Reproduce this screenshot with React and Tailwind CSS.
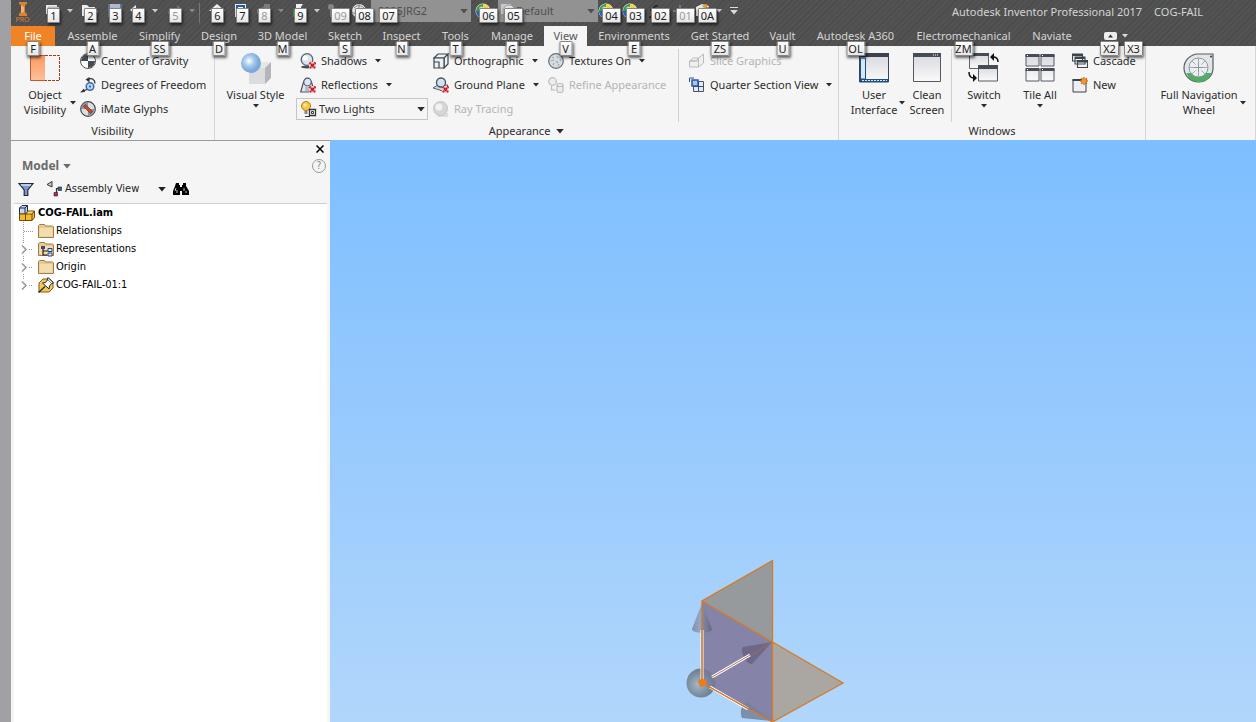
import React, { useState } from 'react';
import clsx from 'clsx';

const quickAccess = [
  { icon: 'new', name: 'New file', tip: '1', width: 'w-[37px]', caret: true },
  { icon: 'open', name: 'Open', tip: '2', width: 'w-[25px]' },
  { icon: 'save', name: 'Save', tip: '3', width: 'w-[23px]' },
  { icon: 'undo', name: 'Undo', tip: '4', width: 'w-[37px]', caret: true },
  { icon: 'redo', name: 'Redo', tip: '5', width: 'w-8', caret: true, disabled: true },
];

const quickAccessTools = [
  { icon: 'home', name: 'Home', tip: '6', width: 'w-[25px]' },
  { icon: 'sheet', name: 'Return', tip: '7', width: 'w-[22px]' },
  { icon: 'local', name: 'Local update', tip: '8', width: 'w-9', caret: true, disabled: true },
  { icon: 'select', name: 'Select', tip: '9', width: 'w-[35px]', caret: true },
  { icon: 'filter', name: 'Filter', tip: '09', width: 'w-6', disabled: true },
  { icon: 'material', name: 'Material', tip: '08', width: 'w-5' },
];

const quickAccessEnd = [
  { icon: 'wheel', name: 'Adjust', tip: '04', width: 'w-6' },
  { icon: 'wheel', name: 'Clear', tip: '03', width: 'w-[25px]' },
  { icon: 'fx', name: 'Parameters', tip: '02', width: 'w-[25px]' },
  { icon: 'plus', name: 'Measure', tip: '01', width: 'w-[22px]', disabled: true },
  { icon: 'brush', name: 'Design doctor', tip: '0A', width: 'w-9', caret: true },
];

const tabs = [
  { label: 'Assemble', tip: 'A', width: 'w-[71px]' },
  { label: 'Simplify', tip: 'SS', width: 'w-[63px]' },
  { label: 'Design', tip: 'D', width: 'w-14' },
  { label: '3D Model', tip: 'M', width: 'w-[71px]' },
  { label: 'Sketch', tip: 'S', width: 'w-[54px]' },
  { label: 'Inspect', tip: 'N', width: 'w-[59px]' },
  { label: 'Tools', tip: 'T', width: 'w-[49px]' },
  { label: 'Manage', tip: 'G', width: 'w-16' },
  { label: 'View', tip: 'V', width: 'w-[43px]' },
  { label: 'Environments', tip: 'E', width: 'w-[94px]' },
  { label: 'Get Started', tip: 'ZS', width: 'w-[78px]' },
  { label: 'Vault', tip: 'U', width: 'w-[47px]' },
  { label: 'Autodesk A360', tip: 'OL', width: 'w-[99px]' },
  { label: 'Electromechanical', tip: 'ZM', width: 'w-[117px]' },
  { label: 'Naviate', width: 'w-[60px]' },
];

const treeItems = [
  { label: 'Relationships', icon: 'folder' },
  { label: 'Representations', icon: 'repFolder', expandable: true },
  { label: 'Origin', icon: 'folder', expandable: true },
  { label: 'COG-FAIL-01:1', icon: 'part', expandable: true, last: true },
];

const redCross = (
  <g>
    <rect x="9" y="9" width="7" height="7" fill="#f6dada" />
    <path d="M9.5 9.5l6 6M15.5 9.5l-6 6" stroke="#c4161c" strokeWidth="2.2" strokeDasharray="1.6 .5" />
  </g>
);

const colorWheel = (
  <g>
    <circle cx="8" cy="8" r="7.5" fill="#f4f4f4" />
    <path d="M8 8V1a7 7 0 0 0-7 7z" fill="#3f9b45" />
    <path d="M8 8V1a7 7 0 0 1 6 4z" fill="#f3d43b" />
    <path d="M8 8l6-3a7 7 0 0 1-2 9z" fill="#e2602c" />
    <path d="M8 8H1a7 7 0 0 0 11 6z" fill="#2d67c0" />
    <circle cx="6.5" cy="6" r="2.5" fill="#fff" opacity=".7" />
  </g>
);

const folderShape = (
  <g>
    <path d="M.5 14.500v-12l1-1h5l1 1.500h7l1 1v10.500z" fill="#e9c98f" stroke="#a07d45" />
    <path d="M1.500 5h13v8.500h-13z" fill="#f3dcae" />
  </g>
);

const drawings = {
  new: (
    <g>
      <path d="M1 2h11v9H1z" fill="#ececec" />
      <path d="M3 4h11v9H3z" fill="#d2d2d2" stroke="#888" strokeWidth=".5" />
    </g>
  ),
  open: <path d="M0 2h5l2 2h6v3H5l-2 6H0zM6 8h10l-3 6H3z" fill="#ededed" />,
  save: (
    <g>
      <path d="M1 1h14v13H1z" fill="#66758c" />
      <path d="M3 1h10v6H3z" fill="#aebacb" />
      <path d="M4 9h8v5H4z" fill="#ddd" />
    </g>
  ),
  undo: <path d="M0 7l6-5v3h4c4 0 5 3 5 7-1-3-3-4-5-4H6v4z" fill="#eee" />,
  redo: <path d="M16 7l-6-5v3H6c-4 0-5 3-5 7 1-3 3-4 5-4h4v4z" fill="#777" />,
  home: (
    <g>
      <path d="M8 1l8 7h-2v6H2V8H0z" fill="#f2f2f2" />
      <path d="M8 4l4 4v5H4V8z" fill="#bcbcbc" />
    </g>
  ),
  sheet: (
    <g>
      <path d="M1 1h11v13H1z" fill="#e8eef5" />
      <path d="M3 3h7v9H3z" fill="#fff" stroke="#245c9c" strokeWidth="2" />
    </g>
  ),
  local: <path d="M1 6h5V3l7 6-7 5v-3H1zM8 1h6v4H8z" fill="#7c7c7c" />,
  select: (
    <g>
      <path d="M4 1h7l-2 3v4H4z" fill="#f1f1f1" />
      <path d="M1 7l6-1 2 2v6H1z" fill="#3c9a47" />
    </g>
  ),
  filter: (
    <g fill="#858585">
      <circle cx="4" cy="4" r="3" />
      <path d="M3 5h2v9H3zM7 8h7v6H7z" />
    </g>
  ),
  material: (
    <g>
      <circle cx="8" cy="8" r="7" fill="#e6e6e6" />
      <path d="M3 5c3-3 7-3 10 0M1 9c4 3 10 3 14 0M8 1v14" stroke="#888" fill="none" />
    </g>
  ),
  wheel: colorWheel,
  ball: (
    <g>
      <path d="M1 1h10v10H1z" fill="#c9c9c9" />
      <circle cx="9" cy="8" r="6" fill="#e3e3e3" stroke="#999" />
    </g>
  ),
  fx: <path d="M2 14c3 1 3-3 4-6s1-6 5-5M3 7h6M9 8l5 6M14 8l-5 6" stroke="#222" strokeWidth="1.5" fill="none" />,
  plus: <path d="M8 2v12M1 8h14" stroke="#777" strokeWidth="2" />,
  brush: (
    <g>
      <path d="M2 4l6-3 7 2-4 10H2z" fill="#e9e9e9" />
      <path d="M8 3l3-2 3 1-2 5z" fill="#ef9b2b" />
      <path d="M12 4l3 1-1 5z" fill="#3867ad" />
    </g>
  ),
  gravity: (
    <g>
      <circle cx="8" cy="8" r="7.5" fill="#fff" stroke="#555" />
      <path d="M8 8V1a7 7 0 0 0-7 7zM8 8h7a7 7 0 0 1-7 7z" fill="#464b54" />
    </g>
  ),
  freedom: (
    <g fill="none">
      <circle cx="10" cy="9.5" r="3.8" fill="#b9d5f2" stroke="#3a6cb0" strokeWidth="1.5" />
      <circle cx="10" cy="9.5" r="1" fill="#27518e" />
      <path d="M8 2.500c4-2 7 0 7 4M7 12.500l-4 1.500" stroke="#333" strokeWidth="1.3" />
      <path d="M9.500 0L5.500 2.500l4 3z" fill="#333" />
      <path d="M0 15.500l4-4 1 3.500z" fill="#333" />
    </g>
  ),
  glyphs: (
    <g>
      <circle cx="8" cy="8" r="7.3" fill="#d9dee4" stroke="#444" strokeWidth="1.2" />
      <path d="M8 8V1a7 7 0 0 0-7 7zM8 8h7a7 7 0 0 1-7 7z" fill="#8d949d" />
      <path d="M3.500 5.500l2-2 7 7-2 2z" fill="#c84a26" stroke="#7c2a12" strokeWidth=".7" />
    </g>
  ),
  shadows: (
    <g>
      <ellipse cx="7" cy="14" rx="6" ry="1.5" fill="#454e5a" />
      <circle cx="7" cy="6.5" r="5.8" fill="#d8e4ef" stroke="#5b6571" strokeWidth="1.3" />
      <circle cx="5.5" cy="5" r="2.5" fill="#fff" />
      {redCross}
    </g>
  ),
  reflections: (
    <g>
      <path d="M3.500 5h8l3 10H.7z" fill="#e6e9ee" stroke="#4b5360" strokeWidth="1.2" />
      <circle cx="7.5" cy="5" r="3.8" fill="#dae6f1" stroke="#4b5360" strokeWidth="1.2" />
      <path d="M5 14v-3a2.500 2.500 0 0 1 5 0v3" fill="#aebccc" />
      {redCross}
    </g>
  ),
  lights: (
    <g>
      <circle cx="5" cy="5" r="4.5" fill="#fbc83f" stroke="#b57a17" />
      <circle cx="4" cy="4" r="1.5" fill="#fff1b8" />
      <path d="M3.500 9.500h3V13h-3z" fill="#888" />
      <path d="M8.500 8.500h6v6h-6z" fill="#fff" stroke="#333" strokeWidth="1.3" />
      <path d="M10.500 10.500h2v2h-2z" stroke="#333" fill="none" />
      <path d="M4 15.500h5" stroke="#333" />
    </g>
  ),
  ortho: (
    <g fill="#eef1f4" stroke="#3d454f" strokeWidth="1.2">
      <path d="M1 5l4-4h10l-4 4zM11 5l4-4v10l-4 4z" />
      <path d="M1 5h10v10H1zM1 9h5v6" />
    </g>
  ),
  ground: (
    <g>
      <path d="M0 11l5-3h10l-5 6z" fill="#cfd8e2" stroke="#59636f" />
      <circle cx="8" cy="5.5" r="4.5" fill="#d2e2f2" stroke="#42505f" strokeWidth="1.3" />
      {redCross}
    </g>
  ),
  rayTrace: (
    <g>
      <path d="M3 12h12v4H5z" fill="#dedede" />
      <circle cx="7.5" cy="7.5" r="7" fill="#d6d6d6" stroke="#c4c4c4" />
      <circle cx="6" cy="6" r="3.5" fill="#f2f2f2" />
    </g>
  ),
  textures: (
    <g>
      <circle cx="8" cy="8" r="7.3" fill="#d5dce2" stroke="#666e77" strokeWidth="1.2" />
      <path d="M4 4l2 1M9 3l1 2M3 8l3-1M8 8l2 2M12 6l1 2M5 12l1-2M10 13l1-2" stroke="#a3adb6" strokeWidth="1.3" />
    </g>
  ),
  refine: (
    <g fill="#ededed" stroke="#bcbcbc" strokeWidth="1.2">
      <circle cx="4.5" cy="4.5" r="3.8" />
      <path d="M9 8c0-2 6-2 6 0v6c0 2-6 2-6 0zM9 8c0 2 6 2 6 0M3.500 9v4h4" />
    </g>
  ),
  slice: (
    <g fill="#f0f0f0" stroke="#bbb">
      <path d="M.5 8l4-3h6l-4 3zM.5 8h9v6h-9z" />
      <path d="M9.500 5l5-4v9l-5 4z" />
    </g>
  ),
  quarter: (
    <g>
      <path d="M5 4.500h9.500v10H4.500V9" fill="#e6eaf0" stroke="#4a5563" />
      <path d="M3 3h6v6H3z" fill="#a9c6f0" stroke="#2456a8" strokeWidth="1.5" />
      <path d="M.5 5V1H5M9.500 5v10M5 9.500h10" fill="none" stroke="#31507e" />
    </g>
  ),
  cascade: (
    <g fill="#f4f6f8" stroke="#3e444c" strokeWidth="1.1">
      <path d="M.5 1h10v7H.5zM3 4h10v7H3zM5.500 7.500h10v7h-10z" />
      <path d="M.5 2h10M3 5h10M5.500 8.500h10" strokeWidth="1.8" />
    </g>
  ),
  newWindow: (
    <g>
      <path d="M1 2.500h13v12.500H1z" fill="#eef0f3" stroke="#3e444c" />
      <path d="M.5 3h14" stroke="#3e444c" strokeWidth="2" />
      <path d="M12 0l1 2 2-1-1 2 2 1-2 1 1 2-2-1-1 2-1-2-2 1 1-2-2-1 2-1-1-2 2 1z" fill="#f29a27" stroke="#c85e14" strokeWidth=".6" />
    </g>
  ),
  funnel: (
    <g>
      <path d="M1 2.500h14L9.800 9v5.500H6.200V9z" fill="#7c98c4" stroke="#1d2a44" strokeWidth="1.2" />
      <path d="M3 4h10" stroke="#e6eefb" strokeWidth="1.2" />
    </g>
  ),
  assembly: (
    <g fill="none">
      <path d="M1 3.500l5-3v5.500z" fill="#ccc" stroke="#333" />
      <path d="M10.500 15V7.500H14" stroke="#333" strokeWidth="1.2" />
      <path d="M12 6h3.500v3.500H12z" fill="#3c5fa8" stroke="#222" strokeWidth=".6" />
      <path d="M8 11.500h3.500V15H8z" fill="#c22347" stroke="#222" strokeWidth=".6" />
    </g>
  ),
  binoculars: (
    <g fill="#000">
      <path d="M3 2h3v2h1v10H0v-4l2-5zM10 2h3v3l3 5v4H9V4h1zM6 6h4v4H6z" />
      <path d="M2 10l1-3M4 12V9M11 10V7M13 12v-2" stroke="#fff" strokeWidth=".8" />
    </g>
  ),
  iam: (
    <g strokeWidth="1">
      <path d="M.5 3L3 .5h5.500v6L6.500 9h-6z" fill="#c5dbf5" stroke="#1f2a3c" />
      <path d="M.5 3h5.500v6M6 3L8.500.5" fill="none" stroke="#1f2a3c" />
      <path d="M.5 9h6L9 6h6.500v6.500L13 15.500H.5z" fill="#f5b92c" stroke="#6d4a0c" />
      <path d="M6.500 9h6.500l2.500-3M13 9v6.500M6.500 9v6.500" fill="none" stroke="#6d4a0c" />
      <path d="M9.500 6.800h4.500l-1.500 1.400H8.300z" fill="#fde08a" />
    </g>
  ),
  folder: folderShape,
  repFolder: (
    <g>
      {folderShape}
      <path d="M3 5h4v3H3z" fill="#2c4c86" />
      <path d="M5 8v6h4M5 10h5" stroke="#222" strokeWidth="1.2" fill="none" />
      <path d="M10 7.500h4v3h-4zM10 12h4v3h-4z" fill="#e4ebf5" stroke="#24457e" />
    </g>
  ),
  part: (
    <g>
      <path d="M1 6l4-4h7l3 3v6l-4 4H1z" fill="#f4c95b" stroke="#80590f" />
      <path d="M10 .5L15.500 6l-2 .5-2 2.500-.5 3L4.500 6l3-.5L9.500 3z" fill="#fff" stroke="#222" />
      <path d="M7 9.500L.5 15.500" stroke="#222" strokeWidth="1.2" />
      <path d="M10 3l3 3" stroke="#888" />
    </g>
  ),
};

function Icon({ name, className }) {
  return (
    <svg viewBox="0 0 16 16" aria-hidden="true" className={clsx('h-4 w-4 shrink-0', className)}>
      {drawings[name]}
    </svg>
  );
}

function Caret({ className }) {
  return (
    <svg viewBox="0 0 6 4" aria-hidden="true" className={clsx('h-1 w-1.5 shrink-0 fill-current', className)}>
      <path d="M0 0h6L3 3.500z" />
    </svg>
  );
}

function KeyTip({ text, disabled, className }) {
  return (
    <span
      className={clsx(
        'absolute z-20 flex h-[15px] items-center justify-center rounded-[1px] border border-[#858585] bg-linear-to-b from-white to-[#e6e6e6] text-[11px] leading-[13px] shadow-[1px_2px_3px_rgba(0,0,0,0.6)]',
        text.length > 1 ? 'w-[19px]' : 'w-[13px]',
        disabled ? 'text-[#9a9a9a]' : 'text-[#222]',
        className,
      )}
    >
      {text}
    </span>
  );
}

function QuickButton({ item }) {
  return (
    <button
      type="button"
      aria-label={item.name}
      disabled={item.disabled}
      className={clsx('relative flex h-[26px] shrink-0 items-center', item.width)}
    >
      <Icon name={item.icon} className="mb-1" />
      {item.caret && <Caret className={clsx('ml-1.5 mb-1', item.disabled ? 'text-[#888]' : 'text-[#ccc]')} />}
      <KeyTip
        text={item.tip}
        disabled={item.disabled}
        className={clsx('top-2', item.tip.length > 1 ? 'left-1' : 'left-0.5')}
      />
    </button>
  );
}

function QuickSelect({ label, value, tip, icon, tipClass }) {
  return (
    <div className="relative flex h-[22px] w-[100px] shrink-0 items-center self-start bg-[#929292] text-[#505050]">
      {icon && <Icon name={icon} className="absolute left-0.5" />}
      <select
        aria-label={label}
        className={clsx('h-full w-full appearance-none pr-3', icon ? 'pl-[18px]' : 'pl-[7px]')}
      >
        <option>{value}</option>
      </select>
      <Caret className="pointer-events-none absolute right-[3px] !h-[5px] !w-2" />
      <KeyTip text={tip} className={clsx('top-2', tipClass)} />
    </div>
  );
}

function SmallButton({ icon, label, caret, disabled }) {
  return (
    <button
      type="button"
      disabled={disabled}
      className={clsx('flex h-6 items-center whitespace-nowrap', disabled && 'text-[#b4b4b4]')}
    >
      <Icon name={icon} className="mr-[5px]" />
      {label}
      {caret && <Caret className="ml-2" />}
    </button>
  );
}

function LargeButton({ lines, children, caret, className }) {
  const sideCaret = caret === 'side';
  return (
    <button type="button" className={clsx('relative flex shrink-0 flex-col items-center pt-1 whitespace-nowrap', className)}>
      {children}
      <span className="mt-0.5 block leading-[15px]">
        {lines.map((line) => (
          <span key={line} className="block">{line}</span>
        ))}
      </span>
      {caret && <Caret className={sideCaret ? 'absolute -right-0.5 top-[52px]' : 'mt-0.5'} />}
    </button>
  );
}

function Panel({ title, caret, className, children }) {
  return (
    <section aria-label={title || 'Navigate'} className={clsx('flex shrink-0 flex-col border-r border-[#d6d6d6] pt-[3px]', className)}>
      <div className="flex h-[73px]">{children}</div>
      <div className="flex h-[18px] items-center justify-center gap-1.5">
        {title}
        {caret && <Caret className="!h-[5px] !w-2" />}
      </div>
    </section>
  );
}

function WindowArt({ kind }) {
  return (
    <svg viewBox="0 0 32 32" aria-hidden="true" className="h-8 w-8">
      <defs>
        <linearGradient id="pane" x1="0" y1="0" x2="0" y2="1">
          <stop offset="0" stopColor="#d7d8de" />
          <stop offset="1" stopColor="#fafafa" />
        </linearGradient>
      </defs>
      {kind === 'interface' && (
        <g>
          <path d="M1.500 1h29v28h-29z" fill="url(#pane)" stroke="#35455a" />
          <path d="M1 0h30v4H1z" fill="#3c414b" />
          <path d="M2.500 5h5v21h-5z" fill="#d4e8fa" stroke="#1f4f86" />
          <path d="M2 27.500h28" stroke="#1f4f86" strokeWidth="3" />
          <path d="M4 27.500h25" stroke="#d4e8fa" strokeDasharray="2 1" />
        </g>
      )}
      {kind === 'clean' && (
        <g>
          <path d="M2.500 1h27v27.500h-27z" fill="url(#pane)" stroke="#555a62" />
          <path d="M2 0h28v4H2z" fill="#474b54" />
          <path d="M22 2h6" stroke="#fff" strokeDasharray="1 1" />
        </g>
      )}
      {kind === 'switch' && (
        <g>
          <path d="M1.500 1.500h19v14h-19z" fill="url(#pane)" stroke="#60656e" />
          <path d="M1 0h20v3H1z" fill="#474b54" />
          <path d="M10.500 13h19v15h-19z" fill="url(#pane)" stroke="#555a62" />
          <path d="M10 12h20v4H10z" fill="#474b54" />
          <path d="M30 9c0-4-2-5-5-5M1 19c0 4 2 6 5 6" fill="none" stroke="#111" strokeWidth="1.5" />
          <path d="M26 0v8l-4-4zM5 21v8l4-4z" fill="#111" />
        </g>
      )}
      {kind === 'tile' && (
        <g fill="url(#pane)" stroke="#555a62">
          <path d="M2 2h13v11H2zM17 2h13v11H17zM2 16h13v12H2zM17 16h13v12H17z" />
          <path d="M1.500 2.500h14M16.500 2.500h14M1.500 16.500h14M16.500 16.500h14" stroke="#474b54" strokeWidth="3" />
          <path d="M3 2.500h1M18 2.500h1M3 16.500h1M18 16.500h1" stroke="#fff" />
        </g>
      )}
    </svg>
  );
}

function Ribbon() {
  return (
    <div className="flex h-[94px] overflow-hidden bg-[#f5f5f5] text-[#2c2c2c]">
      <Panel title="Visibility" className="w-[204px]">
        <LargeButton lines={['Object', 'Visibility']} caret="side" className="mr-1.5 ml-[5px] w-[58px]">
          <svg viewBox="0 0 32 32" aria-hidden="true" className="h-8 w-8">
            <defs>
              <linearGradient id="halfBox" x1="0" y1="0" x2="0" y2="1">
                <stop offset="0" stopColor="#fa9a61" />
                <stop offset="1" stopColor="#fdc09b" />
              </linearGradient>
            </defs>
            <path d="M16 2.500h14.500v25H16" fill="none" stroke="#a23a1c" strokeDasharray="3 1" />
            <path d="M1.500 2.500H16v25H1.500z" fill="url(#halfBox)" />
            <path d="M16 2.500H1.500v25H16" fill="none" stroke="#bf5a33" />
          </svg>
        </LargeButton>
        <div className="flex flex-col items-start">
          <SmallButton icon="gravity" label="Center of Gravity" />
          <SmallButton icon="freedom" label="Degrees of Freedom" />
          <SmallButton icon="glyphs" label="iMate Glyphs" />
        </div>
      </Panel>

      <Panel title="Appearance" caret className="w-[624px]">
        <LargeButton lines={['Visual Style']} caret="below" className="w-[81px]">
          <svg viewBox="0 0 32 32" aria-hidden="true" className="h-8 w-8">
            <defs>
              <radialGradient id="orb" cx=".4" cy=".4">
                <stop offset="0" stopColor="#fff" />
                <stop offset=".5" stopColor="#a8cbec" />
                <stop offset="1" stopColor="#7aa8d8" />
              </radialGradient>
            </defs>
            <path d="M9 15l7-6h15v16l-6 6H9z" fill="#e6e7e9" />
            <path d="M25 15l6-6v16l-6 6z" fill="#b3b5b9" />
            <path d="M9 15h16v16H9z" fill="#dcdcde" />
            <circle cx="11" cy="10" r="10" fill="url(#orb)" />
          </svg>
        </LargeButton>
        <div className="mr-[5px] flex w-[132px] flex-col items-start">
          <div className="pl-1"><SmallButton icon="shadows" label="Shadows" caret /></div>
          <div className="pl-1"><SmallButton icon="reflections" label="Reflections" caret /></div>
          <div className="relative mt-px flex h-[22px] w-full items-center border border-[#c6c6c6]">
            <Icon name="lights" className="absolute left-1" />
            <select aria-label="Lighting style" className="h-full w-full appearance-none pl-[22px]">
              <option>Two Lights</option>
            </select>
            <Caret className="pointer-events-none absolute right-0.5 !h-[5px] !w-2" />
          </div>
        </div>
        <div className="flex w-[115px] flex-col items-start">
          <SmallButton icon="ortho" label="Orthographic" caret />
          <SmallButton icon="ground" label="Ground Plane" caret />
          <SmallButton icon="rayTrace" label="Ray Tracing" disabled />
        </div>
        <div className="mr-2.5 flex w-[131px] flex-col items-start border-r border-[#d0d0d0]">
          <SmallButton icon="textures" label="Textures On" caret />
          <SmallButton icon="refine" label="Refine Appearance" disabled />
        </div>
        <div className="flex flex-col items-start">
          <SmallButton icon="slice" label="Slice Graphics" disabled />
          <SmallButton icon="quarter" label="Quarter Section View" caret />
        </div>
      </Panel>

      <Panel title="Windows" className="w-[307px]">
        <LargeButton lines={['User', 'Interface']} caret="side" className="ml-1.5 w-[58px]">
          <WindowArt kind="interface" />
        </LargeButton>
        <LargeButton lines={['Clean', 'Screen']} className="w-[49px] border-r border-[#d0d0d0]">
          <WindowArt kind="clean" />
        </LargeButton>
        <LargeButton lines={['Switch']} caret="below" className="w-16">
          <WindowArt kind="switch" />
        </LargeButton>
        <LargeButton lines={['Tile All']} caret="below" className="w-12">
          <WindowArt kind="tile" />
        </LargeButton>
        <div className="ml-2 flex flex-col items-start">
          <SmallButton icon="cascade" label="Cascade" />
          <SmallButton icon="newWindow" label="New" />
        </div>
      </Panel>

      <Panel className="w-[110px]">
        <LargeButton lines={['Full Navigation', 'Wheel']} caret="side" className="ml-2 w-[90px]">
          <svg viewBox="0 0 32 32" aria-hidden="true" className="h-8 w-8">
            <path d="M30 1v14A14.500 14 0 1 1 15 1z" fill="#e3e6e8" stroke="#555c62" strokeWidth="1.2" />
            <path d="M3.500 20h25c-2 6-7 9-12.500 9s-10.500-3-12.500-9z" fill="#4fae62" />
            <circle cx="15.5" cy="14.5" r="9.5" fill="#eceff1" stroke="#8f979d" />
            <path d="M15.500 5v19M6 14.500h19M9 8l13 13M22 8L9 21" stroke="#a3aab0" />
            <circle cx="15.5" cy="14.5" r="4" fill="#eceff1" />
            <path d="M15.500 10v9M11 14.500h9" stroke="#8f979d" />
            <circle cx="28" cy="3.5" r="1" fill="#333" />
          </svg>
        </LargeButton>
      </Panel>
    </div>
  );
}

function TreeBranch({ expandable, last }) {
  return (
    <svg viewBox="0 0 18 18" aria-hidden="true" className="h-[18px] w-[18px] shrink-0" fill="none">
      <path d={last ? 'M3.500 0v6' : 'M3.500 0v18'} stroke="#999" strokeDasharray="1 1" />
      <path d={expandable ? 'M9 9.500h4' : 'M4 9.500h9'} stroke="#999" strokeDasharray="1 1" />
      {expandable && (
        <g>
          <path d="M1 4h6v11H1z" fill="#fff" />
          <path d="M2 5.500l4 4-4 4" stroke="#999" strokeWidth="1.6" />
        </g>
      )}
    </svg>
  );
}

function ModelBrowser() {
  return (
    <aside className="w-[319px] shrink-0 border-t border-[#9a9a9a] bg-[#f5f5f5] font-['DejaVu_Sans_Condensed',sans-serif]">
      <div className="flex h-4 items-center justify-end pr-1">
        <button type="button" aria-label="Close" className="flex h-3 w-3 items-center justify-center">
          <svg viewBox="0 0 8 8" aria-hidden="true" className="h-2 w-2">
            <path d="M.5.500l7 7M7.500.500l-7 7" stroke="#000" strokeWidth="1.5" />
          </svg>
        </button>
      </div>
      <div className="flex h-[18px] items-center pr-1 pl-[11px]">
        <button type="button" className="flex items-center gap-1 font-['Noto_Sans',sans-serif] text-[12px] font-bold text-[#6a6a6a]">
          Model
          <Caret className="!h-[5px] !w-2" />
        </button>
        <button
          type="button"
          aria-label="Help"
          className="ml-auto flex h-3.5 w-3.5 items-center justify-center rounded-full border border-[#999] text-[10px] leading-3 text-[#888]"
        >
          ?
        </button>
      </div>
      <div className="flex h-7 items-center pl-[7px] text-[#222]">
        <button type="button" aria-label="Filter" className="mr-3"><Icon name="funnel" /></button>
        <button type="button" className="flex items-center">
          <Icon name="assembly" className="mr-[3px]" />
          <span className="w-[93px] text-left">Assembly View</span>
          <Caret className="!h-[5px] !w-2" />
        </button>
        <button type="button" aria-label="Find" className="ml-[7px]"><Icon name="binoculars" /></button>
      </div>
      <div className="mx-[3px] h-[calc(100%-62px)] border-t border-[#d0d0d0] bg-white text-black">
        <div className="flex h-[18px] items-center pl-[5px] font-bold">
          <Icon name="iam" className="mr-[3px]" />
          COG-FAIL.iam
        </div>
        <ul>
          {treeItems.map((item) => (
            <li key={item.label} className="flex h-[18px] items-center pl-1.5">
              <TreeBranch expandable={item.expandable} last={item.last} />
              <Icon name={item.icon} className="mr-0.5" />
              {item.label}
            </li>
          ))}
        </ul>
      </div>
    </aside>
  );
}

function Viewport() {
  return (
    <main className="flex flex-1 items-end justify-center bg-linear-to-b from-[#7dbeff] to-[#b1d6fb] pr-14">
      <svg viewBox="0 0 190 172" role="img" aria-label="Origin planes" className="h-[172px] w-[190px]">
        <defs>
          <radialGradient id="originBall" cx=".4" cy=".55">
            <stop offset="0" stopColor="#a3b5c4" />
            <stop offset="1" stopColor="#667684" />
          </radialGradient>
          <linearGradient id="cone" x1="0" y1="0" x2="1" y2="0">
            <stop offset="0" stopColor="#6f7c92" />
            <stop offset=".4" stopColor="#8d97b0" />
            <stop offset="1" stopColor="#59607a" />
          </linearGradient>
        </defs>
        <path d="M32 51L102.500 10.500V92z" fill="#969a9c" />
        <path d="M32 51l70.500 41v80L32 133z" fill="#8683a8" />
        <path d="M102.500 92L173 133l-70.500 39z" fill="#aaa7a3" />
        <circle cx="31" cy="133" r="14.5" fill="url(#originBall)" opacity=".9" />
        <path d="M32 82v51l70.500 39V92z" fill="#8683a8" opacity=".45" />
        <path d="M32 53l10 26c0 5-20 5-20 0z" fill="url(#cone)" opacity=".75" />
        <path d="M102 92L73 97c-4 4 4 18 9 17z" fill="#655f7c" opacity=".75" />
        <path d="M102 171l-25-19c-5 2-8 10-5 16z" fill="#75809a" opacity=".85" />
        <path d="M32 80v50M42 127l38-22M40 137l38 22" stroke="#fff" strokeWidth="3" />
        <path d="M32 80v50M42 127l38-22M40 137l38 22" stroke="#b57963" />
        <path d="M32 133V51l70.500-40.500V172L173 133l-70.500-41L32 51M32 133l70.500 39" fill="none" stroke="#d87a22" strokeWidth="1.3" />
        <path d="M82 105l20-13" stroke="#ad6b4a" />
        <path d="M28 131l4-3 5 4-2 4-5 1z" fill="#ee7d16" />
      </svg>
    </main>
  );
}

export default function App() {
  const [activeTab, setActiveTab] = useState('View');

  return (
    <div className="flex min-h-screen overflow-hidden bg-[#a1a1a5] pl-[11px] font-['Noto_Sans',sans-serif] text-[11px] leading-4">
      <div className="flex min-w-0 flex-1 flex-col">
        <header className="bg-[#505050] bg-[repeating-linear-gradient(135deg,#4b4b4b_0_1px,#525252_1px_4px)] text-[#d4d4d4]">
          <div className="flex h-[26px] items-center">
            <button type="button" aria-label="Inventor menu" className="mr-4 ml-[5px] flex w-[13px] shrink-0 flex-col items-center">
              <svg viewBox="0 0 12 14" aria-hidden="true" className="h-3.5 w-3">
                <path d="M2 0h8v2L8 3v7l2 2v2H2v-2l2-2V3L2 2z" fill="#d9822f" />
                <path d="M4 3l3 2v5l-3 1z" fill="#f6b273" />
              </svg>
              <span className="text-[7px] leading-[8px] text-[#d9822f]">PRO</span>
            </button>
            {quickAccess.map((item) => (
              <QuickButton key={item.tip} item={item} />
            ))}
            <span className="mr-[9px] h-5 w-px bg-[#777]" />
            {quickAccessTools.map((item) => (
              <QuickButton key={item.tip} item={item} />
            ))}
            <QuickSelect label="Material" value="S235JRG2" tip="07" tipClass="left-2" />
            <div className="w-1" />
            <QuickButton item={{ icon: 'wheel', name: 'Appearance', tip: '06', width: 'w-[23px]' }} />
            <QuickSelect label="Appearance" value="Default" tip="05" icon="ball" tipClass="left-1.5" />
            {quickAccessEnd.map((item) => (
              <QuickButton key={item.tip} item={item} />
            ))}
            <button type="button" aria-label="Customize" className="flex flex-col items-center gap-0.5 pb-1">
              <span className="h-px w-2 bg-[#ddd]" />
              <Caret className="!h-[5px] !w-2 text-[#ddd]" />
            </button>
            <div className="ml-auto flex gap-3 pr-[53px] pb-0.5 whitespace-nowrap">
              <span>Autodesk Inventor Professional 2017</span>
              <span>COG-FAIL</span>
            </div>
          </div>
          <nav className="flex h-5">
            <button type="button" className="relative mr-0.5 w-11 bg-[#f08326] text-white">
              File
              <KeyTip text="F" className="top-[15px] left-1/2 -translate-x-1/2" />
            </button>
            {tabs.map((tab) => (
              <button
                key={tab.label}
                type="button"
                onClick={() => setActiveTab(tab.label)}
                className={clsx(
                  'relative flex shrink-0 items-center justify-center whitespace-nowrap',
                  tab.width,
                  tab.label === activeTab && 'bg-[#f5f5f5] text-[#555]',
                )}
              >
                {tab.label}
                {tab.tip && <KeyTip text={tab.tip} className="top-[15px] left-1/2 -translate-x-1/2" />}
              </button>
            ))}
            <button type="button" aria-label="Minimize ribbon" className="relative ml-[22px] flex w-[18px] items-center">
              <svg viewBox="0 0 13 8" aria-hidden="true" className="h-2 w-[13px]">
                <rect width="13" height="8" rx="2" fill="#eee" />
                <path d="M4 5.500h5L6.500 2.500z" fill="#333" />
              </svg>
              <KeyTip text="X2" className="top-[15px] -left-1" />
            </button>
            <button type="button" aria-label="Ribbon options" className="relative flex w-4 items-center">
              <Caret className="text-[#ddd]" />
              <KeyTip text="X3" className="top-[15px] left-0.5" />
            </button>
          </nav>
        </header>
        <Ribbon />
        <div className="flex flex-1">
          <ModelBrowser />
          <Viewport />
        </div>
      </div>
    </div>
  );
}
